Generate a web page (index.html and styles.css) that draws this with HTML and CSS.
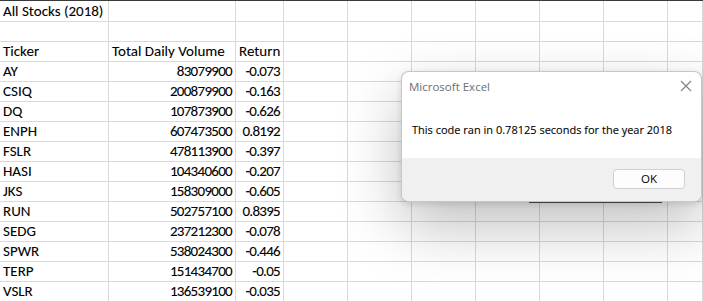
FILE: index.html
```html
<!DOCTYPE html>
<html lang="en">
<head>
<meta charset="utf-8">
<title>Excel</title>
<link rel="stylesheet" href="styles.css">
</head>
<body>
<div class="sheet">
  <div class="row first"><div class="c a txt">All Stocks (2018)</div><div class="c b"></div><div class="c cc"></div><div class="c e"></div><div class="c e"></div><div class="c e"></div><div class="c e"></div><div class="c e"></div><div class="c e"></div><div class="c e"></div></div>
  <div class="row"><div class="c a"></div><div class="c b"></div><div class="c cc"></div><div class="c e"></div><div class="c e"></div><div class="c e"></div><div class="c e"></div><div class="c e"></div><div class="c e"></div><div class="c e"></div></div>
  <div class="row"><div class="c a txt">Ticker</div><div class="c b txt">Total Daily Volume</div><div class="c cc txt">Return</div><div class="c e"></div><div class="c e"></div><div class="c e"></div><div class="c e"></div><div class="c e"></div><div class="c e"></div><div class="c e"></div></div>
  <div class="row"><div class="c a txt">AY</div><div class="c b num">83079900</div><div class="c cc num">-0.073</div><div class="c e"></div><div class="c e"></div><div class="c e"></div><div class="c e"></div><div class="c e"></div><div class="c e"></div><div class="c e"></div></div>
  <div class="row"><div class="c a txt">CSIQ</div><div class="c b num">200879900</div><div class="c cc num">-0.163</div><div class="c e"></div><div class="c e"></div><div class="c e"></div><div class="c e"></div><div class="c e"></div><div class="c e"></div><div class="c e"></div></div>
  <div class="row"><div class="c a txt">DQ</div><div class="c b num">107873900</div><div class="c cc num">-0.626</div><div class="c e"></div><div class="c e"></div><div class="c e"></div><div class="c e"></div><div class="c e"></div><div class="c e"></div><div class="c e"></div></div>
  <div class="row"><div class="c a txt">ENPH</div><div class="c b num">607473500</div><div class="c cc num">0.8192</div><div class="c e"></div><div class="c e"></div><div class="c e"></div><div class="c e"></div><div class="c e"></div><div class="c e"></div><div class="c e"></div></div>
  <div class="row"><div class="c a txt">FSLR</div><div class="c b num">478113900</div><div class="c cc num">-0.397</div><div class="c e"></div><div class="c e"></div><div class="c e"></div><div class="c e"></div><div class="c e"></div><div class="c e"></div><div class="c e"></div></div>
  <div class="row"><div class="c a txt">HASI</div><div class="c b num">104340600</div><div class="c cc num">-0.207</div><div class="c e"></div><div class="c e"></div><div class="c e"></div><div class="c e"></div><div class="c e"></div><div class="c e"></div><div class="c e"></div></div>
  <div class="row"><div class="c a txt">JKS</div><div class="c b num">158309000</div><div class="c cc num">-0.605</div><div class="c e"></div><div class="c e"></div><div class="c e"></div><div class="c e"></div><div class="c e"></div><div class="c e"></div><div class="c e"></div></div>
  <div class="row"><div class="c a txt">RUN</div><div class="c b num">502757100</div><div class="c cc num">0.8395</div><div class="c e"></div><div class="c e"></div><div class="c e"></div><div class="c e"></div><div class="c e"></div><div class="c e"></div><div class="c e"></div></div>
  <div class="row"><div class="c a txt">SEDG</div><div class="c b num">237212300</div><div class="c cc num">-0.078</div><div class="c e"></div><div class="c e"></div><div class="c e"></div><div class="c e"></div><div class="c e"></div><div class="c e"></div><div class="c e"></div></div>
  <div class="row"><div class="c a txt">SPWR</div><div class="c b num">538024300</div><div class="c cc num">-0.446</div><div class="c e"></div><div class="c e"></div><div class="c e"></div><div class="c e"></div><div class="c e"></div><div class="c e"></div><div class="c e"></div></div>
  <div class="row"><div class="c a txt">TERP</div><div class="c b num">151434700</div><div class="c cc num">-0.05</div><div class="c e"></div><div class="c e"></div><div class="c e"></div><div class="c e"></div><div class="c e"></div><div class="c e"></div><div class="c e"></div></div>
  <div class="row"><div class="c a txt">VSLR</div><div class="c b num">136539100</div><div class="c cc num">-0.035</div><div class="c e"></div><div class="c e"></div><div class="c e"></div><div class="c e"></div><div class="c e"></div><div class="c e"></div><div class="c e"></div></div>
</div>

<div class="selbar"></div>

<div class="dialog" role="dialog">
  <div class="dlg-body">
    <div class="dlg-head">
      <span class="dlg-title">Microsoft Excel</span>
      <svg class="dlg-close" width="12" height="12" viewBox="0 0 12 12"><path d="M1 1L11 11M11 1L1 11" stroke="#808080" stroke-width="1.1" fill="none"/></svg>
    </div>
    <div class="dlg-msg">This code ran in 0.78125 seconds for the year 2018</div>
  </div>
  <div class="dlg-foot">
    <button class="ok">OK</button>
  </div>
</div>
</body>
</html>
```
FILE: styles.css
```css
html, body {
  margin: 0;
  padding: 0;
  background: #ffffff;
  overflow: hidden;
}
body {
  width: 703px;
  height: 301px;
  position: relative;
  font-family: Carlito, Lato, "Liberation Sans", sans-serif;
}
.sheet {
  border-top: 1px solid #3a3a3a;
  width: 703px;
  overflow: hidden;
}
.row {
  display: flex;
  height: 20px;
  box-sizing: border-box;
  border-bottom: 1px solid #d9d9d9;
}
.row.first {
  height: 21px;
}
.c {
  box-sizing: border-box;
  border-right: 1px solid #d9d9d9;
  flex: none;
  font-size: 15px;
  line-height: 19px;
  color: #000;
  white-space: nowrap;
  -webkit-text-stroke: 0.08px #000;
}
.row.first .c { line-height: 20px; }
.a { width: 109px; }
.b { width: 127px; }
.cc { width: 48px; }
.e { width: 64px; }
.e:last-child { flex: 1 1 auto; width: auto; min-width: 0; }
.txt { padding-left: 3px; text-align: left; }
.num { padding-right: 3px; text-align: right; letter-spacing: -0.7px; }

.selbar {
  position: absolute;
  left: 529px;
  top: 201px;
  width: 133px;
  height: 2px;
  background: #555555;
}

.dialog {
  position: absolute;
  left: 401px;
  top: 71px;
  width: 301px;
  height: 131px;
  box-sizing: border-box;
  border: 1px solid rgba(0,0,0,0.22);
  border-radius: 8px;
  overflow: hidden;
  background: #ffffff;
  display: flex;
  flex-direction: column;
  box-shadow: 0 2px 6px rgba(0,0,0,0.12), 0 24px 60px rgba(0,0,0,0.25);
  font-family: "Open Sans", "Noto Sans", sans-serif;
}
.dlg-body {
  flex: 1;
  display: flex;
  flex-direction: column;
}
.dlg-head {
  display: flex;
  justify-content: space-between;
  align-items: center;
  padding: 2px 9px 0 7px;
  height: 24px;
}
.dlg-title {
  font-size: 11.5px;
  color: #6e6e6e;
}
.dlg-close { display: block; }
.dlg-msg {
  padding: 24px 0 0 10px;
  font-size: 11px;
  color: #000;
  -webkit-text-stroke: 0.1px #000;
}
.dlg-foot {
  height: 43px;
  background: #f0f0f0;
  display: flex;
  justify-content: flex-end;
  align-items: flex-start;
  padding: 11px 16px 0 0;
  box-sizing: border-box;
}
.ok {
  width: 72px;
  height: 20px;
  border: 1px solid #d0d0d0;
  border-radius: 4px;
  background: #fdfdfd;
  font-family: "Open Sans", "Noto Sans", sans-serif;
  font-size: 11.5px;
  color: #000;
  padding: 0;
  line-height: 18px;
}
```
